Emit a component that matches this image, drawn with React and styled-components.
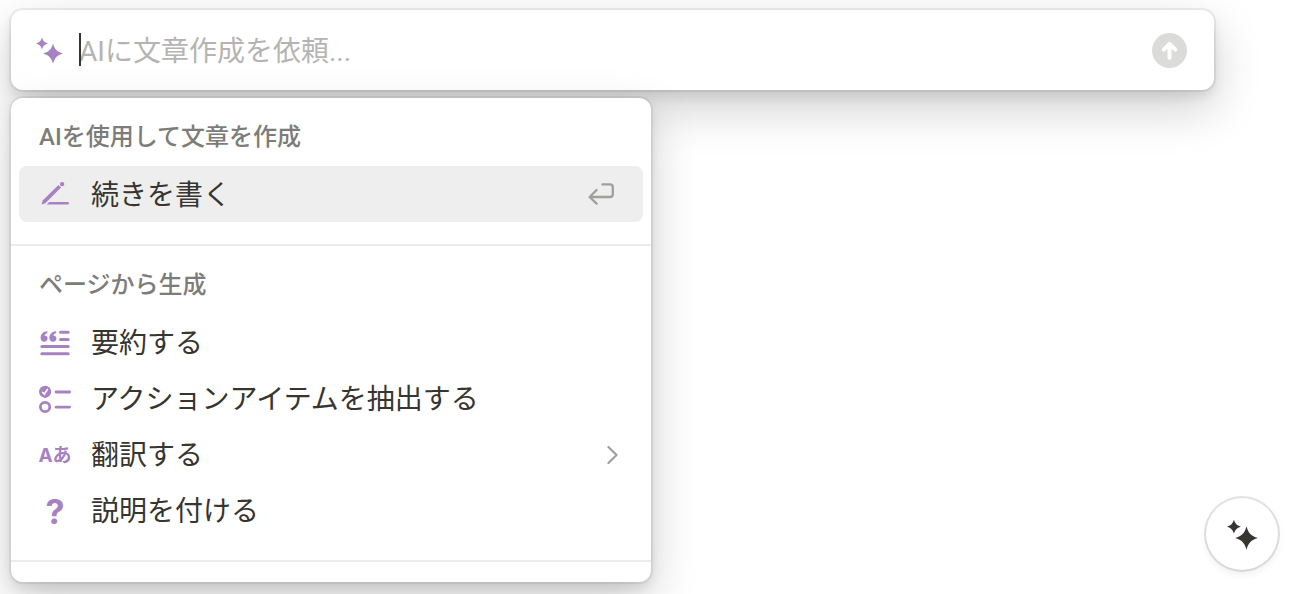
import React from 'react';
import styled, { createGlobalStyle } from 'styled-components';

const purple = '#a782c3';
const ink = '#37352f';

const GlobalStyle = createGlobalStyle`
  *, *::before, *::after { box-sizing: border-box; }
  body {
    margin: 0;
    background: #fff;
    color: ${ink};
    font-family: Roboto, "Noto Sans CJK JP", sans-serif;
  }
  button, input { font: inherit; color: inherit; }
  h2, ul { margin: 0; padding: 0; }
`;

const Page = styled.main`
  display: flex;
  flex-direction: column;
  gap: 8px;
  padding: 10px 80px 12px 11px;
`;

const Surface = styled.div`
  background: #fff;
  border-radius: 12px;
  box-shadow:
    0 0 0 2px rgba(15, 15, 15, 0.06),
    0 6px 12px rgba(15, 15, 15, 0.1),
    0 18px 48px rgba(15, 15, 15, 0.2);
`;

const PromptBar = styled(Surface).attrs({ as: 'form' })`
  display: flex;
  align-items: center;
  gap: 16px;
  height: 80px;
  padding: 0 27px 0 25px;
`;

const Field = styled.div`
  position: relative;
  flex: 1;
  min-width: 0;
  display: flex;
`;

const Caret = styled.span`
  position: absolute;
  left: 0;
  top: 3px;
  width: 2px;
  height: 33px;
  background: ${ink};
`;

const PromptInput = styled.input`
  width: 100%;
  height: 40px;
  padding: 2px 0 0;
  border: 0;
  outline: 0;
  background: transparent;
  font-size: 28px;
  line-height: 38px;
  &::placeholder { color: #b5b4b2; opacity: 1; }
`;

const SendButton = styled.button`
  display: flex;
  flex: none;
  width: 35px;
  height: 35px;
  padding: 0;
  border: 0;
  border-radius: 50%;
  background: #dbdbd9;
  color: #fff;
`;

const Menu = styled(Surface).attrs({ as: 'nav' })`
  width: 640px;
  max-width: 100%;
  padding-bottom: 20px;
`;

const Section = styled.section`
  padding: 20px 8px 22px;
  border-bottom: 2px solid #ececec;
`;

const SectionTitle = styled.h2`
  padding: 0 20px;
  margin-bottom: 10px;
  font-size: 24px;
  line-height: 38px;
  font-weight: 500;
  color: #7d7c78;
`;

const Items = styled.ul`
  list-style: none;
`;

const ItemButton = styled.button`
  display: flex;
  align-items: center;
  gap: 20px;
  width: 100%;
  height: 56px;
  padding: 0 24px 0 20px;
  border: 0;
  border-radius: 8px;
  background: ${({ $active }) => ($active ? '#eeeeee' : 'transparent')};
  font-size: 28px;
  line-height: 40px;
  text-align: left;
`;

const ItemLabel = styled.span`
  flex: 1;
  padding-top: 4px;
  font-weight: 400;
`;

const IconSlot = styled.span`
  display: flex;
  align-items: center;
  justify-content: center;
  flex: none;
  width: 32px;
  height: 32px;
  color: ${({ $muted }) => ($muted ? '#9f9f9d' : purple)};
`;

const GlyphIcon = styled.span`
  padding-top: 4px;
  font-family: Inter, "Noto Sans CJK JP", sans-serif;
  font-size: ${({ $size }) => $size}px;
  line-height: 32px;
  font-weight: 700;
  white-space: nowrap;
`;

const FloatingButton = styled.button`
  position: fixed;
  right: 16px;
  bottom: 24px;
  display: flex;
  align-items: center;
  justify-content: center;
  width: 72px;
  height: 72px;
  padding: 0;
  border: 0;
  border-radius: 50%;
  background: #fff;
  color: ${ink};
  box-shadow:
    0 0 0 2px rgba(15, 15, 15, 0.12),
    0 4px 8px rgba(15, 15, 15, 0.07);
`;

const Sparkles = ({ width, height, color }) => (
  <svg width={width} height={height} viewBox="0 0 27 28" fill={color} aria-hidden="true">
    <path d="M6 1.6C7.2 5.2 8.4 6.4 12 7.6C8.4 8.8 7.2 10 6 13.6C4.8 10 3.6 8.8 0 7.6C3.6 6.4 4.8 5.2 6 1.6Z" />
    <path d="M17 7.5C19 13.7 20.8 15.6 27 17.6C20.8 19.6 19 21.5 17 27.7C15 21.5 13.2 19.6 7 17.6C13.2 15.6 15 13.7 17 7.5Z" />
  </svg>
);

const ArrowUp = () => (
  <svg width="35" height="35" viewBox="0 0 35 35" fill="none" stroke="currentColor" strokeWidth="4" strokeLinecap="round" strokeLinejoin="round" aria-hidden="true">
    <path d="M17.5 24.7V11.5M11.7 16.6L17.5 10.8L23.3 16.6" />
  </svg>
);

const Pencil = () => (
  <svg width="32" height="32" viewBox="0 0 32 32" fill="currentColor" aria-hidden="true">
    <path d="M2.5 26.4L3.7 22.4L19.4 6.9L22.1 9.4L6.3 25.2Z" />
    <circle cx="23.1" cy="6.1" r="2.2" />
    <path d="M10.2 24H28.6A1.2 1.2 0 0 1 28.6 26.6H7.8Z" />
  </svg>
);

const Summary = () => (
  <svg width="32" height="32" viewBox="0 0 32 32" fill="currentColor" aria-hidden="true">
    <path d="M8.4 5.2C4.2 5.5 1.6 8 1.6 11.8C1.6 14.3 3.1 15.8 5.2 15.8C7.2 15.8 8.6 14.5 8.6 12.6C8.6 10.7 7.3 9.5 5.5 9.5C5.8 8.3 6.8 7.4 8.4 7Z" />
    <path d="M17.2 5.2C13 5.5 10.4 8 10.4 11.8C10.4 14.3 11.9 15.8 14 15.8C16 15.8 17.4 14.5 17.4 12.6C17.4 10.7 16.1 9.5 14.3 9.5C14.6 8.3 15.6 7.4 17.2 7Z" />
    <path d="M21.5 6.3H29.2M21.5 13.4H29.2M2.8 20.6H29.2M2.8 27.7H29.2" fill="none" stroke="currentColor" strokeWidth="3" strokeLinecap="round" />
  </svg>
);

const Checklist = () => (
  <svg width="32" height="32" viewBox="0 0 32 32" fill="none" stroke="currentColor" strokeWidth="2.8" strokeLinecap="round" aria-hidden="true">
    <circle cx="6.1" cy="9.8" r="6.1" fill="currentColor" stroke="none" />
    <path d="M3.6 10.3L5.3 12.3L8.5 7.4" stroke="#fff" strokeWidth="1.6" strokeLinejoin="round" />
    <circle cx="6.1" cy="25" r="4.7" />
    <path d="M17 10H30.6M17 25.1H30.6" />
  </svg>
);

const ReturnKey = () => (
  <svg width="32" height="32" viewBox="0 0 32 32" fill="none" stroke="currentColor" strokeWidth="2.3" strokeLinecap="round" strokeLinejoin="round" aria-hidden="true">
    <path d="M15.4 6.4H23Q25.8 6.4 25.8 9.2V16.2Q25.8 19 23 19H2.6M9.6 12L2.6 19L9.6 25.6" />
  </svg>
);

const Chevron = () => (
  <svg width="32" height="32" viewBox="0 0 32 32" fill="none" stroke="currentColor" strokeWidth="2.2" strokeLinecap="round" strokeLinejoin="round" aria-hidden="true">
    <path d="M21.4 9L29.6 17L21.4 25" />
  </svg>
);

const sections = [
  {
    title: 'AIを使用して文章を作成',
    items: [{ label: '続きを書く', icon: <Pencil />, trailing: <ReturnKey />, active: true }],
  },
  {
    title: 'ページから生成',
    items: [
      { label: '要約する', icon: <Summary /> },
      { label: 'アクションアイテムを抽出する', icon: <Checklist /> },
      { label: '翻訳する', icon: <GlyphIcon $size={19} aria-hidden="true">Aあ</GlyphIcon>, trailing: <Chevron /> },
      { label: '説明を付ける', icon: <GlyphIcon $size={34} aria-hidden="true">?</GlyphIcon> },
    ],
  },
];

export default function App() {
  return (
    <>
      <GlobalStyle />
      <Page>
        <PromptBar onSubmit={(e) => e.preventDefault()}>
          <Sparkles width={27} height={28} color={purple} />
          <Field>
            <PromptInput type="text" aria-label="AIに文章作成を依頼" placeholder="AIに文章作成を依頼..." />
            <Caret />
          </Field>
          <SendButton type="submit" aria-label="送信">
            <ArrowUp />
          </SendButton>
        </PromptBar>
        <Menu>
          {sections.map((section) => (
            <Section key={section.title}>
              <SectionTitle>{section.title}</SectionTitle>
              <Items>
                {section.items.map((item) => (
                  <li key={item.label}>
                    <ItemButton type="button" $active={item.active}>
                      <IconSlot>{item.icon}</IconSlot>
                      <ItemLabel>{item.label}</ItemLabel>
                      {item.trailing && <IconSlot $muted>{item.trailing}</IconSlot>}
                    </ItemButton>
                  </li>
                ))}
              </Items>
            </Section>
          ))}
        </Menu>
      </Page>
      <FloatingButton type="button" aria-label="AIアシスタント">
        <Sparkles width={31} height={32} color="currentColor" />
      </FloatingButton>
    </>
  );
}
